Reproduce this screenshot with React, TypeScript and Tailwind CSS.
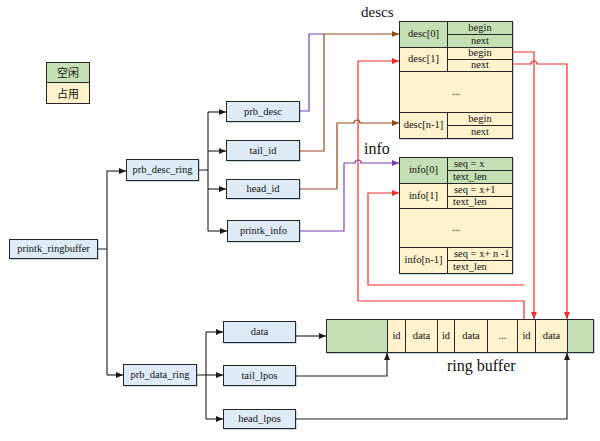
import React from "react";

const serif = "font-[family-name:Liberation_Serif]";

type BoxProps = { x: number; y: number; w: number; h: number; label: string };

function Node({ x, y, w, h, label }: BoxProps) {
  return (
    <div
      className={`absolute flex items-center justify-center border border-[#262626] bg-[#deebf7] text-[10.5px] text-[#111] shadow-[1px_1px_0_#c9d9ea] ${serif}`}
      style={{ left: x, top: y, width: w, height: h }}
    >
      {label}
    </div>
  );
}

type Row = { name: string; a: string; b: string; h: number; free?: boolean; left?: boolean };

function Table({ x, y, rows }: { x: number; y: number; rows: Row[] }) {
  return (
    <div
      className={`absolute flex w-[114px] flex-col border border-[#262626] text-[10.5px] leading-none text-[#111] shadow-[1px_1px_0_#c9d9ea] ${serif}`}
      style={{ left: x, top: y }}
    >
      {rows.map((r, i) =>
        r.a === "" ? (
          <div
            key={i}
            className="flex items-center justify-center border-t border-[#262626] bg-[#fff2cc] first:border-t-0"
            style={{ height: r.h }}
          >
            ...
          </div>
        ) : (
          <div
            key={i}
            className={`flex border-t border-[#262626] first:border-t-0 ${r.free ? "bg-[#c5e0b4]" : "bg-[#fff2cc]"}`}
            style={{ height: r.h }}
          >
            <div className="flex w-[48px] items-center justify-center border-r border-[#262626]">
              {r.name}
            </div>
            <div className="flex flex-1 flex-col">
              <div className={`flex flex-1 items-center border-b border-[#262626] ${r.left ? "pl-[6px]" : "justify-center"}`}>
                {r.a}
              </div>
              <div className={`flex flex-1 items-center ${r.left ? "pl-[5px]" : "justify-center"}`}>{r.b}</div>
            </div>
          </div>
        )
      )}
    </div>
  );
}

const ring = [
  { w: 60, t: "", free: true },
  { w: 18, t: "id" },
  { w: 32, t: "data" },
  { w: 17, t: "id" },
  { w: 33, t: "data" },
  { w: 30, t: "..." },
  { w: 18, t: "id" },
  { w: 32, t: "data" },
  { w: 26, t: "", free: true },
];

function Wires() {
  const black = "#1a1a1a";
  const brown = "#8f4a1c";
  const purple = "#7b3fb0";
  const red = "#ee2a2a";
  return (
    <svg className="pointer-events-none absolute inset-0" width="600" height="441" fill="none">
      <defs>
        {[
          ["ab", black],
          ["abr", brown],
          ["ap", purple],
          ["ar", red],
        ].map(([id, c]) => (
          <marker
            key={id}
            id={id}
            markerWidth="7"
            markerHeight="6"
            refX="7"
            refY="3"
            orient="auto"
            markerUnits="userSpaceOnUse"
          >
            <path d="M0 0 L7 3 L0 6 Z" fill={c} />
          </marker>
        ))}
      </defs>

      {/* tree */}
      <g stroke={black} strokeWidth="1.1">
        <path d="M98 249 H107 M107 171 V375 M199 170 H208 M208 112 V231 M197 375 H206 M206 332 V419" />
        <path d="M107 171 H126" markerEnd="url(#ab)" />
        <path d="M107 375 H123" markerEnd="url(#ab)" />
        <path d="M208 112 H226" markerEnd="url(#ab)" />
        <path d="M208 151 H226" markerEnd="url(#ab)" />
        <path d="M208 189 H226" markerEnd="url(#ab)" />
        <path d="M208 231 H227" markerEnd="url(#ab)" />
        <path d="M206 332 H223" markerEnd="url(#ab)" />
        <path d="M206 375 H223" markerEnd="url(#ab)" />
        <path d="M206 419 H223" markerEnd="url(#ab)" />
        <path d="M296 336 H326" markerEnd="url(#ab)" />
        <path d="M296 376 H387 V353" markerEnd="url(#ab)" />
        <path d="M296 419 H567 V353" markerEnd="url(#ab)" />
      </g>

      {/* descs / info links */}
      <g strokeWidth="1.2">
        <path d="M300 111 H309 V34 H324" stroke={purple} />
        <path d="M300 151 H324 V34 H399" stroke={brown} markerEnd="url(#abr)" />
        <path d="M300 189 H337 V123 H354 a3 3 0 0 1 6 0 H399" stroke={brown} markerEnd="url(#abr)" />
        <path d="M300 231 H344 V163 H355 a3 3 0 0 1 6 0 H399" stroke={purple} markerEnd="url(#ap)" />
      </g>

      {/* ring buffer links */}
      <g stroke={red} strokeWidth="1.2">
        <path d="M524 319 V301 H358 V61 H399" markerEnd="url(#ar)" />
        <path d="M524 285 H368 V193 H399" markerEnd="url(#ar)" />
        <path d="M512 52 H534 V319" markerEnd="url(#ar)" />
        <path d="M512 64 H531 a3 3 0 0 1 6 0 H567 V319" markerEnd="url(#ar)" />
      </g>
    </svg>
  );
}

export default function App() {
  return (
    <div className="relative h-[441px] w-[600px] overflow-hidden bg-white">
      {/* legend */}
      <div className="absolute left-[46px] top-[62px] flex w-[44px] flex-col border border-[#262626] text-[11px] leading-none text-[#111] font-[family-name:Noto_Sans_CJK_SC]">
        <div className="flex h-[20px] items-center justify-center border-b border-[#262626] bg-[#c5e0b4]">空闲</div>
        <div className="flex h-[20px] items-center justify-center bg-[#fff2cc]">占用</div>
      </div>

      <Node x={9} y={239} w={89} h={20} label="printk_ringbuffer" />
      <Node x={126} y={159} w={73} h={22} label="prb_desc_ring" />
      <Node x={123} y={364} w={74} h={22} label="prb_data_ring" />
      <Node x={226} y={101} w={74} h={21} label="prb_desc" />
      <Node x={226} y={140} w={74} h={21} label="tail_id" />
      <Node x={226} y={179} w={74} h={20} label="head_id" />
      <Node x={227} y={220} w={73} h={22} label="printk_info" />
      <Node x={223} y={321} w={73} h={22} label="data" />
      <Node x={223} y={365} w={73} h={21} label="tail_lpos" />
      <Node x={223} y={409} w={73} h={20} label="head_lpos" />

      <div className={`absolute left-[361px] top-[5px] text-[15px] leading-none text-[#111] ${serif}`}>descs</div>
      <Table
        x={399}
        y={21}
        rows={[
          { name: "desc[0]", a: "begin", b: "next", h: 25, free: true },
          { name: "desc[1]", a: "begin", b: "next", h: 24 },
          { name: "", a: "", b: "", h: 41 },
          { name: "desc[n-1]", a: "begin", b: "next", h: 26 },
        ]}
      />

      <div className={`absolute left-[364px] top-[141px] text-[16px] leading-none text-[#111] ${serif}`}>info</div>
      <Table
        x={399}
        y={157}
        rows={[
          { name: "info[0]", a: "seq = x", b: "text_len", h: 25, free: true, left: true },
          { name: "info[1]", a: "seq = x+1", b: "text_len", h: 25, left: true },
          { name: "", a: "", b: "", h: 39 },
          { name: "info[n-1]", a: "seq = x+ n -1", b: "text_len", h: 26, left: true },
        ]}
      />

      {/* ring buffer */}
      <div
        className={`absolute left-[326px] top-[319px] flex h-[34px] border border-[#262626] text-[10.5px] text-[#111] shadow-[1px_1px_0_#c9d9ea] ${serif}`}
      >
        {ring.map((c, i) => (
          <div
            key={i}
            className={`flex items-center justify-center border-l border-[#262626] first:border-l-0 ${c.free ? "bg-[#c5e0b4]" : "bg-[#fff2cc]"}`}
            style={{ width: c.w }}
          >
            {c.t}
          </div>
        ))}
      </div>
      <div className={`absolute left-[447px] top-[358px] text-[16px] leading-none text-[#111] ${serif}`}>ring buffer</div>

      <Wires />
    </div>
  );
}
